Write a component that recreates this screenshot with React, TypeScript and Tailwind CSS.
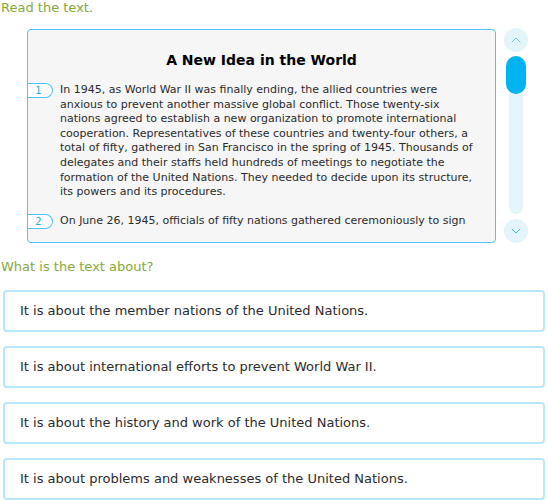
import { ChevronUp, ChevronDown } from 'lucide-react';

const paragraphs = [
  'In 1945, as World War II was finally ending, the allied countries were anxious to prevent another massive global conflict. Those twenty-six nations agreed to establish a new organization to promote international cooperation. Representatives of these countries and twenty-four others, a total of fifty, gathered in San Francisco in the spring of 1945. Thousands of delegates and their staffs held hundreds of meetings to negotiate the formation of the United Nations. They needed to decide upon its structure, its powers and its procedures.',
  'On June 26, 1945, officials of fifty nations gathered ceremoniously to sign',
];

const choices = [
  'It is about the member nations of the United Nations.',
  'It is about international efforts to prevent World War II.',
  'It is about the history and work of the United Nations.',
  'It is about problems and weaknesses of the United Nations.',
];

export default function App() {
  return (
    <div className="h-[500px] w-[548px] overflow-hidden bg-white font-['DejaVu_Sans',Verdana,sans-serif] text-[#2b2b2b]">
      <p className="pl-[1px] text-[13px] leading-[15px] text-[#86a83a]">Read the text.</p>

      <div className="mt-[14px] flex items-start">
        <div className="ml-[27px] h-[214px] w-[469px] overflow-hidden rounded-[4px] border border-[#4fc3f7] bg-[#f6f6f6]">
          <h2 className="pt-[21px] text-center text-[14px] font-bold leading-[18px] text-black">A New Idea in the World</h2>
          <div className="mt-[14px] space-y-[14px]">
            {paragraphs.map((text, i) => (
              <div key={i} className="flex items-start">
                <span className="-ml-[3px] mt-[0px] flex h-[15px] w-[28px] shrink-0 items-center justify-center rounded-r-full border border-l-0 border-[#4fc3f7] bg-white text-[10px] text-[#29a9e1]">
                  {i + 1}
                </span>
                <p className="ml-[7px] w-[414px] text-[11px] leading-[14.6px]">{text}</p>
              </div>
            ))}
          </div>
        </div>

        <div className="ml-[7px] -mt-[1px] flex w-[26px] flex-col items-center">
          <button className="flex h-[24px] w-[24px] items-center justify-center rounded-full bg-[#e4f4fb] text-[#7ccbee]">
            <ChevronUp size={16} strokeWidth={1.5} />
          </button>
          <div className="mt-[4px] flex h-[158px] w-[14px] flex-col rounded-full bg-[#e4f4fb]">
            <div className="-mx-[3px] h-[38px] rounded-full bg-[#00b4f0]" />
          </div>
          <button className="mt-[5px] flex h-[24px] w-[24px] items-center justify-center rounded-full bg-[#e4f4fb] text-[#45b8ea]">
            <ChevronDown size={16} strokeWidth={1.5} />
          </button>
        </div>
      </div>

      <p className="mt-[16px] pl-[1px] text-[13px] leading-[15px] text-[#86a83a]">What is the text about?</p>

      <div className="mt-[16px] flex flex-col gap-[14px] px-[3px]">
        {choices.map((c) => (
          <div key={c} className="flex h-[42px] items-center rounded-[4px] border-2 border-[#b8e6fb] bg-white pl-[15px] text-[13px]">
            {c}
          </div>
        ))}
      </div>
    </div>
  );
}
